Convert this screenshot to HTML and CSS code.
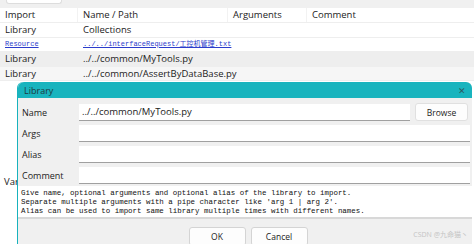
FILE: index.html
```html
<!DOCTYPE html>
<html lang="en">
<head>
    <meta charset="UTF-8">
    <link rel="stylesheet" href="styles.css">
    <title>Library</title>
</head>
<body>

<div id="page">
    <div class="topbar"><div class="tab"></div></div>
    <div class="row head">
        <div class="c1">Import</div>
        <div class="c2">Name / Path</div>
        <div class="c3">Arguments</div>
        <div class="c4">Comment</div>
    </div>
    <div class="row">
        <div class="c1">Library</div>
        <div class="c2">Collections</div>
    </div>
    <div class="row link">
        <div class="c1">Resource</div>
        <div class="c2">../../interfaceRequest/工控机管理.txt</div>
    </div>
    <div class="row grey">
        <div class="c1">Library</div>
        <div class="c2">../../common/MyTools.py</div>
    </div>
    <div class="row light">
        <div class="c1">Library</div>
        <div class="c2">../../common/AssertByDataBase.py</div>
    </div>
    <div class="var">Var</div>
</div>

<div id="dialog">
    <div class="title">
        <span>Library</span>
        <span class="close">&#x2715;</span>
    </div>
    <div class="form">
        <div class="field">
            <label>Name</label>
            <div class="input">../../common/MyTools.py</div>
            <button class="browse">Browse</button>
        </div>
        <div class="field">
            <label>Args</label>
            <div class="input"></div>
        </div>
        <div class="field">
            <label>Alias</label>
            <div class="input"></div>
        </div>
        <div class="field">
            <label>Comment</label>
            <div class="input"></div>
        </div>
    </div>
    <div class="help">Give name, optional arguments and optional alias of the library to import.
Separate multiple arguments with a pipe character like 'arg 1 | arg 2'.
Alias can be used to import same library multiple times with different names.</div>
    <div class="buttons">
        <button>OK</button>
        <button>Cancel</button>
    </div>
    <div class="mark">CSDN @九命猫丶</div>
</div>

</body>
</html>
```

FILE: styles.css
```css
body {
    margin: 0;
    width: 474px;
    height: 244px;
    overflow: hidden;
    font-family: "Open Sans", "Noto Sans", sans-serif;
    font-size: 9.5px;
    color: #222;
    background: #fff;
    position: relative;
}

.topbar {
    height: 8px;
    background: #f0f0f0;
    padding-left: 6px;
}

.tab {
    width: 54px;
    height: 3px;
    background: #fff;
    border: 1px solid #ddd;
    border-top: none;
    border-radius: 0 0 3px 3px;
}

.row {
    display: flex;
    height: 13.5px;
    line-height: 13.5px;
    border-bottom: 1px solid #eee;
    white-space: nowrap;
}

.row.head {
    height: 14px;
    line-height: 14px;
}

.c1 {
    width: 73px;
    padding-left: 5px;
}

.c2 {
    width: 145px;
    padding-left: 5px;
}

.c3 {
    width: 74px;
    padding-left: 5px;
}

.c4 {
    padding-left: 5px;
}

.head .c2,
.head .c3,
.head .c4 {
    border-left: 1px solid #f2f2f2;
    margin-left: -1px;
}

.row.link {
    font-family: "Liberation Mono", "Noto Sans CJK SC", monospace;
    font-size: 7px;
    color: #2b3ccb;
    text-decoration: underline;
}

.row.grey {
    background: #eeeeee;
}

.row.light {
    background: #f6f6f6;
}

.var {
    margin-top: 94px;
    padding-left: 4px;
    font-size: 9.5px;
}

#dialog {
    position: absolute;
    left: 17px;
    top: 82px;
    width: 454px;
    height: 170px;
    background: #f0f0f0;
    border-left: 1px solid #17b2bd;
    border-radius: 6px 6px 0 0;
}

.title {
    display: flex;
    justify-content: space-between;
    align-items: center;
    height: 16px;
    padding: 0 6px 0 6px;
    background: #19b4be;
    color: #1e3a40;
    font-size: 9px;
    border-radius: 6px 6px 0 0;
}

.close {
    font-size: 9px;
    color: #2c5a60;
}

.form {
    display: flex;
    flex-direction: column;
    gap: 4px;
    padding: 6px 2px 0 0;
}

.field {
    display: flex;
    align-items: flex-start;
    height: 17px;
}

.field label {
    width: 57px;
    padding-left: 4px;
    padding-top: 2px;
    font-size: 9px;
}

.input {
    flex: 1;
    height: 16px;
    line-height: 16px;
    background: #fff;
    border-bottom: 1px solid #a0a0a0;
    padding-left: 3px;
    font-size: 9.5px;
}

.field:first-child .input {
    flex: none;
    width: 328px;
}

.browse {
    margin-left: 5px;
    width: 53px;
    height: 18px;
    margin-top: -1px;
    background: #fdfdfd;
    border: 1px solid #e0e0e0;
    border-radius: 3px;
    font-family: "Open Sans", "Noto Sans", sans-serif;
    font-size: 8.5px;
    color: #222;
    padding: 0;
}

.help {
    margin-top: 2px;
    height: 28px;
    padding: 3px 0 0 3px;
    background: #fff;
    border-bottom: 2px solid #d8d8d8;
    white-space: pre;
    font-family: "Liberation Mono", monospace;
    font-size: 7.45px;
    line-height: 9px;
    color: #111;
}

.buttons {
    display: flex;
    justify-content: center;
    gap: 5px;
    padding: 8px 0 0 6px;
}

.buttons button {
    width: 57px;
    height: 19px;
    background: #fdfdfd;
    border: 1px solid #d4d4d4;
    border-radius: 3px;
    font-family: "Open Sans", "Noto Sans", sans-serif;
    font-size: 8.5px;
    color: #222;
    padding: 0;
}

.mark {
    position: absolute;
    right: 4px;
    bottom: 13px;
    font-size: 7px;
    color: #c4c4c4;
    font-family: "Open Sans", "Noto Sans CJK SC", sans-serif;
}
```
